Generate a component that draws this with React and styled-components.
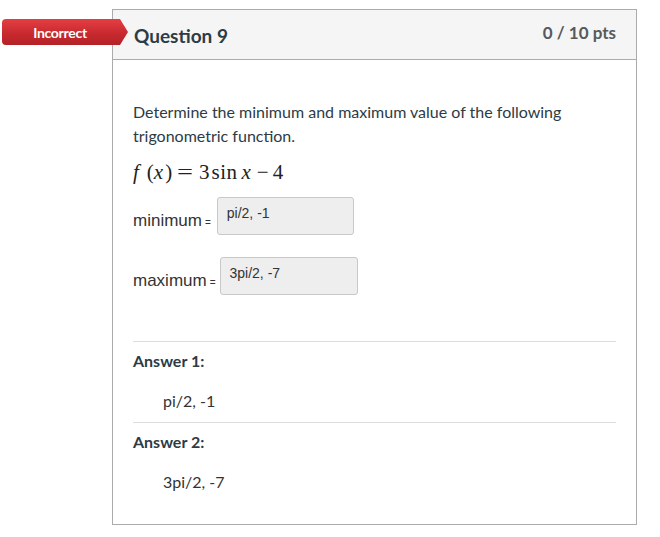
import React from "react";
import styled, { createGlobalStyle } from "styled-components";

const Global = createGlobalStyle`
  html, body { margin: 0; padding: 0; background: #fff; }
  body { font-family: Lato, "Open Sans", sans-serif; color: #2d3b45; }
`;

const Page = styled.div`
  position: relative;
  padding: 9px 0 0 112px;
  width: 525px;
`;

const Badge = styled.div`
  position: absolute;
  left: 2px;
  top: 19px;
  width: 126px;
  height: 26px;
  box-sizing: border-box;
  padding-right: 10px;
  display: flex;
  align-items: center;
  justify-content: center;
  color: #fff;
  font-weight: 700;
  font-size: 14px;
  letter-spacing: -0.3px;
  border-radius: 4px 0 0 4px;
  background: linear-gradient(#e43f43, #c82a2f 55%, #b32226);
  clip-path: polygon(0 0, calc(100% - 8px) 0, 100% 50%, calc(100% - 8px) 100%, 0 100%);
  z-index: 2;
`;

const Card = styled.div`
  border: 1px solid #ababab;
  background: #fff;
`;

const Header = styled.div`
  height: 50px;
  box-sizing: border-box;
  background: #f5f5f5;
  border-bottom: 1px solid #ababab;
  display: flex;
  align-items: center;
  justify-content: space-between;
  padding: 0 20px 0 21px;
`;

const Title = styled.div`
  font-size: 19px;
  font-weight: 700;
  color: #2d3b45;
  margin-top: 2px;
`;

const Points = styled.div`
  font-size: 17px;
  font-weight: 700;
  color: #555a5e;
  margin-top: -4px;
`;

const Body = styled.div`
  padding: 0 20px 32px;
`;

const Prompt = styled.p`
  margin: 40px 0 0;
  font-size: 16px;
  line-height: 24px;
`;

const MathLine = styled.div`
  margin-top: 12px;
  height: 24px;
  line-height: 24px;
  font-family: "Liberation Serif", "DejaVu Serif", serif;
  font-size: 21px;
  color: #222;
  display: flex;
  align-items: baseline;
`;

const Glyph = styled.span`
  display: inline-block;
  font-style: ${(p) => (p.$it ? "italic" : "normal")};
  margin-left: ${(p) => p.$ml || 0}px;
  letter-spacing: ${(p) => p.$ls || 0}px;
  transform: scaleX(${(p) => p.$sx || 1});
  transform-origin: left center;
`;

const FillRow = styled.div`
  display: flex;
  align-items: center;
  gap: ${(p) => p.$gap}px;
  margin-top: ${(p) => p.$mt}px;
`;

const FillLabel = styled.span`
  font-family: "Liberation Sans", Arial, sans-serif;
  font-size: 17px;
  color: #333;
  margin-top: 10px;
`;

const Eq = styled.span`
  font-size: 10px;
  margin-left: 3px;
`;

const FillBox = styled.div`
  width: ${(p) => p.$w}px;
  height: 38px;
  box-sizing: border-box;
  background: #eeeeee;
  border: 1px solid #c8c8c8;
  border-radius: 3px;
  padding: 7px 9px;
  font-family: "Liberation Sans", Arial, sans-serif;
  font-size: 14px;
  line-height: 16px;
  color: #333;
`;

const Divider = styled.hr`
  border: 0;
  border-top: 1px solid #ddd;
  margin: ${(p) => p.$mt}px 0 0;
`;

const AnswerLabel = styled.div`
  margin-top: 9px;
  font-size: 16px;
  font-weight: 700;
  line-height: 20px;
  color: #2d3b45;
`;

const AnswerValue = styled.div`
  margin: 20px 0 0 30px;
  font-size: 16px;
  line-height: 20px;
  color: #333;
`;

export default function App() {
  return (
    <>
      <Global />
      <Page>
        <Badge>Incorrect</Badge>
        <Card>
          <Header>
            <Title>Question 9</Title>
            <Points>0 / 10 pts</Points>
          </Header>
          <Body>
            <Prompt>
              Determine the minimum and maximum value of the following trigonometric function.
            </Prompt>
            <MathLine>
              <Glyph $it>f</Glyph>
              <Glyph $ml={8}>(</Glyph>
              <Glyph $it>x</Glyph>
              <Glyph $ml={2}>)</Glyph>
              <Glyph $ml={5} $sx={1.35}>=</Glyph>
              <Glyph $ml={10}>3</Glyph>
              <Glyph $ml={2} $ls={0.5}>sin</Glyph>
              <Glyph $it $ml={4}>x</Glyph>
              <Glyph $ml={6}>−</Glyph>
              <Glyph $ml={4}>4</Glyph>
            </MathLine>
            <FillRow $mt={13} $gap={6}>
              <FillLabel>
                minimum<Eq>=</Eq>
              </FillLabel>
              <FillBox $w={137}>pi/2, -1</FillBox>
            </FillRow>
            <FillRow $mt={22} $gap={4}>
              <FillLabel>
                maximum<Eq>=</Eq>
              </FillLabel>
              <FillBox $w={138}>3pi/2, -7</FillBox>
            </FillRow>
            <Divider $mt={46} />
            <AnswerLabel>Answer 1:</AnswerLabel>
            <AnswerValue>pi/2, -1</AnswerValue>
            <Divider $mt={11} />
            <AnswerLabel>Answer 2:</AnswerLabel>
            <AnswerValue>3pi/2, -7</AnswerValue>
          </Body>
        </Card>
      </Page>
    </>
  );
}
